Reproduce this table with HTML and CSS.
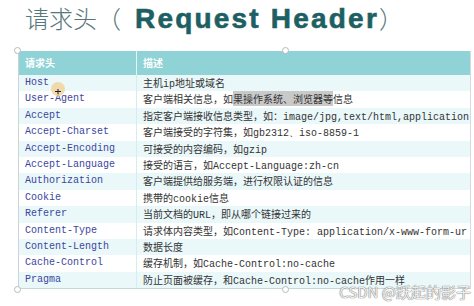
FILE: index.html
```html
<!DOCTYPE html>
<html lang="zh">
<head>
<meta charset="utf-8">
<title>请求头（Request Header）</title>
<link rel="stylesheet" href="styles.css">
</head>
<body>
<div class="slide">
  <h1 class="title"><span class="title-cn">请求头（</span><span class="title-en">Request Header</span><span class="title-cn">）</span></h1>
  <div class="table-wrap">
    <div class="table">
      <div class="row head"><div class="c1">请求头</div><div class="c2">描述</div></div>
      <div class="row alt"><div class="c1">Host</div><div class="c2">主机<span class="m">ip</span>地址或域名</div></div>
      <div class="row"><div class="c1">User-Agent</div><div class="c2">客户端相关信息，如<span class="sel">果操作系统、浏览器等</span>信息</div></div>
      <div class="row alt"><div class="c1">Accept</div><div class="c2">指定客户端接收信息类型，如：<span class="m">image/jpg,text/html,application</span></div></div>
      <div class="row"><div class="c1">Accept-Charset</div><div class="c2">客户端接受的字符集，如<span class="m">gb2312、iso-8859-1</span></div></div>
      <div class="row alt"><div class="c1">Accept-Encoding</div><div class="c2">可接受的内容编码，如<span class="m">gzip</span></div></div>
      <div class="row"><div class="c1">Accept-Language</div><div class="c2">接受的语言，如<span class="m">Accept-Language:zh-cn</span></div></div>
      <div class="row alt"><div class="c1">Authorization</div><div class="c2">客户端提供给服务端，进行权限认证的信息</div></div>
      <div class="row"><div class="c1">Cookie</div><div class="c2">携带的<span class="m">cookie</span>信息</div></div>
      <div class="row alt"><div class="c1">Referer</div><div class="c2">当前文档的<span class="m">URL</span>，即从哪个链接过来的</div></div>
      <div class="row"><div class="c1">Content-Type</div><div class="c2">请求体内容类型，如<span class="m">Content-Type: application/x-www-form-ur</span></div></div>
      <div class="row alt"><div class="c1">Content-Length</div><div class="c2">数据长度</div></div>
      <div class="row"><div class="c1">Cache-Control</div><div class="c2">缓存机制，如<span class="m">Cache-Control:no-cache</span></div></div>
      <div class="row alt"><div class="c1">Pragma</div><div class="c2">防止页面被缓存，和<span class="m">Cache-Control:no-cache</span>作用一样</div></div>
    </div>
    <span class="handle h-tl"></span>
    <span class="handle h-tr"></span>
    <span class="handle h-bl"></span>
    <span class="handle h-br"></span>
    <svg class="cursor" width="16" height="16" viewBox="0 0 16 16">
      <circle cx="8" cy="7" r="7" fill="#f2cf8f" fill-opacity="0.75"/>
      <line x1="5" y1="9.5" x2="11" y2="9.5" stroke="#222" stroke-width="1"/>
      <line x1="8" y1="7" x2="8" y2="12" stroke="#222" stroke-width="1"/>
    </svg>
  </div>
  <div class="watermark">CSDN @跃起的影子</div>
</div>
</body>
</html>
```
FILE: styles.css
```css
html, body {
  margin: 0;
  padding: 0;
  background: #ffffff;
}
.slide {
  position: relative;
  width: 474px;
  height: 306px;
  overflow: hidden;
}
.title {
  margin: 0;
  padding: 0 0 0 25px;
  height: 34px;
  line-height: 34px;
  font-weight: normal;
  white-space: nowrap;
}
.title-cn {
  font-family: "Noto Sans CJK SC", sans-serif;
  font-weight: 300;
  font-size: 24px;
  color: #55767a;
}
.title-en {
  margin-left: 14px;
  font-family: "Liberation Sans", Arial, sans-serif;
  font-weight: bold;
  font-size: 28px;
  letter-spacing: 2.2px;
  color: #1e5f63;
  -webkit-text-stroke: 0.6px #1e5f63;
}
.table-wrap {
  position: relative;
  margin: 17px 0 0 18px;
  width: 453px;
}
.table {
  border-left: 1px solid #c9d6d8;
  border-bottom: 1px solid #c9d6d8;
  border-right: 1px solid #d6dcdd;
  overflow: hidden;
}
.row {
  display: grid;
  grid-template-columns: 118px 1fr;
  height: 16.4px;
  line-height: 16.4px;
  background: #ffffff;
  white-space: nowrap;
}
.row.alt {
  background: #eaf8fa;
}
.row.head {
  height: 24px;
  line-height: 24px;
  background: #8fd3d7;
  color: #ffffff;
  font-family: "Noto Sans CJK SC", sans-serif;
  font-weight: bold;
  font-size: 10px;
}
.c1 {
  padding-left: 6px;
  border-right: 1px solid #d4eef0;
  font-family: "Liberation Mono", "Courier New", monospace;
  font-size: 10px;
  color: #3c469e;
  overflow: hidden;
}
.c2 {
  padding-left: 6px;
  font-family: "Noto Sans CJK SC", sans-serif;
  font-size: 10px;
  color: #333333;
  overflow: hidden;
}
.head .c1 {
  color: #ffffff;
  border-right: 1px solid #e4f6f7;
  font-family: "Noto Sans CJK SC", sans-serif;
}
.head .c2 {
  color: #ffffff;
}
.m {
  font-family: "Liberation Mono", "Courier New", monospace;
  font-size: 10px;
}
.sel {
  background: #c9c9c9;
}
.handle {
  position: absolute;
  width: 5px;
  height: 5px;
  border-radius: 50%;
  background: #ffffff;
  border: 1px solid #b9b9b9;
}
.h-tl { left: -4px; top: -4px; }
.h-tr { left: 264px; top: -4px; }
.h-bl { left: -4px; bottom: -4px; }
.h-br { left: 264px; bottom: -4px; }
.cursor {
  position: absolute;
  left: 32px;
  top: 31px;
}
.watermark {
  position: absolute;
  right: 3px;
  top: 283px;
  font-family: "Noto Sans CJK SC", "Liberation Sans", sans-serif;
  font-size: 15px;
  line-height: 18px;
  color: rgba(255, 255, 255, 0.9);
  text-shadow: 0 0 1px #6d6d6d, 0 0 1px #6d6d6d;
  white-space: nowrap;
}
```
